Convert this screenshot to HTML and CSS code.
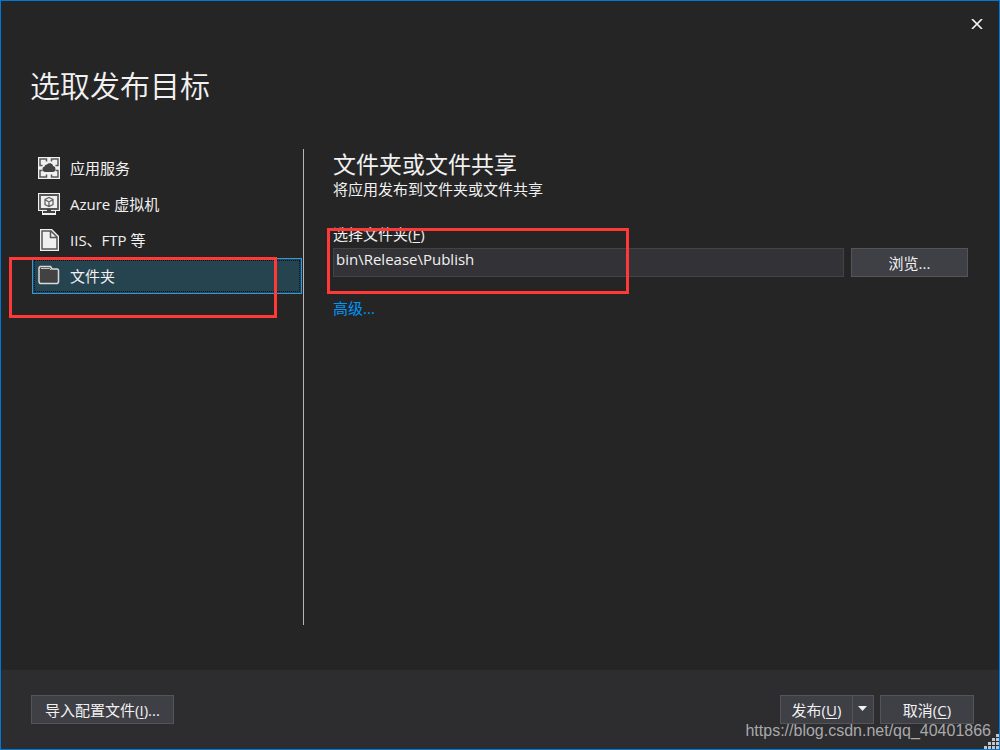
FILE: index.html
```html
<!DOCTYPE html>
<html lang="zh-CN">
<head>
    <meta charset="UTF-8">
    <meta name="viewport" content="width=device-width, initial-scale=1.0">
    <title>选取发布目标</title>
    <link rel="stylesheet" href="styles.css">
</head>
<body>
    <div class="dialog">
        <header class="header">
            <button class="close-btn" type="button" aria-label="关闭">
                <svg width="12" height="10" viewBox="0 0 12 10"><path d="M1 0L11 10M11 0L1 10" stroke="#f1f1f1" stroke-width="1.700"/></svg>
            </button>
            <h1>选取发布目标</h1>
        </header>

        <main class="main">
            <nav class="targets">
                <button class="target" type="button">
                    <svg class="icon" viewBox="0 0 22 22">
                        <path fill="#f0eff1" d="M0 0h22v22H0z"/>
                        <path fill="none" stroke="#5a5a5a" stroke-width="1.500" d="M8.500 4.500V2H2v6.500h2.500M13.500 4.500V2H20v6.500h-2.500M8.500 17.500V20H2v-6.500h2.500M13.500 17.500V20H20v-6.500h-2.500"/>
                        <path fill="#424242" d="M7 15a2.800 2.800 0 0 1-.5-5.500 2.500 2.500 0 0 1 2.500-2 3.500 3.500 0 0 1 6.200 1.600 3 3 0 0 1-.2 5.900z"/>
                    </svg>
                    <span>应用服务</span>
                </button>
                <button class="target" type="button">
                    <svg class="icon" viewBox="0 0 22 22">
                        <path fill="#f0eff1" d="M0 0h22v18h-4v4H4v-4H0z"/>
                        <path fill="none" stroke="#555" stroke-width="1.800" d="M2 2h18v14H2z"/>
                        <path fill="#424242" d="M9 16h4v2h4v2H5v-2h4z"/>
                        <path fill="none" stroke="#666" stroke-width="1.300" d="M11 4.500l4 2v5l-4 2-4-2v-5zM7 6.500l4 2.500 4-2.500M11 9v4.500"/>
                    </svg>
                    <span>Azure 虚拟机</span>
                </button>
                <button class="target" type="button">
                    <svg class="icon" viewBox="0 0 22 22">
                        <path fill="#f0eff1" d="M2 0h12l7 7v15H2z"/>
                        <path fill="none" stroke="#555" stroke-width="1.500" d="M4 2h9l6 6v12H4zM12.500 2v6.500H19"/>
                    </svg>
                    <span>IIS、FTP 等</span>
                </button>
                <button class="target selected" type="button" aria-current="true">
                    <svg class="icon" viewBox="0 0 22 22">
                        <path fill="#424242" stroke="#d8dadb" stroke-width="1.500" stroke-linejoin="round" d="M1 3l1-1.500h10.500L14 4h5.500l1 1v12l-1 1.500H2L1 17z"/>
                        <path fill="none" stroke="#c5c5c5" d="M3 3.500h8.500l1.500 1.500"/>
                    </svg>
                    <span>文件夹</span>
                    <i class="mark mark-target"></i>
                </button>
            </nav>

            <section class="content">
                <h2>文件夹或文件共享</h2>
                <p>将应用发布到文件夹或文件共享</p>
                <div class="field">
                    <label for="folder">选择文件夹(<u>F</u>)</label>
                    <div class="field-row">
                        <input id="folder" type="text" value="bin\Release\Publish">
                        <button class="btn browse" type="button">浏览...</button>
                    </div>
                    <i class="mark mark-field"></i>
                </div>
                <a class="link" href="#">高级...</a>
            </section>
        </main>

        <footer class="footer">
            <button class="btn import" type="button">导入配置文件(<u>I</u>)...</button>
            <div class="split">
                <button class="btn publish" type="button">发布(<u>U</u>)</button>
                <button class="btn arrow" type="button" aria-label="更多发布选项">
                    <svg width="10" height="5" viewBox="0 0 10 5"><path fill="#f1f1f1" d="M0 0h9L4.500 5z"/></svg>
                </button>
            </div>
            <button class="btn cancel" type="button">取消(<u>C</u>)</button>
            <span class="watermark">https://blog.csdn.net/qq_40401866</span>
            <svg class="grip" width="15" height="15" viewBox="0 0 15 15">
                <path fill="#c4c4cc" d="M12 0h3v3h-3zM8 4h3v3H8zM12 4h3v3h-3zM4 8h3v3H4zM8 8h3v3H8zM12 8h3v3h-3zM0 12h3v3H0zM4 12h3v3H4zM8 12h3v3H8zM12 12h3v3h-3z"/>
            </svg>
        </footer>
    </div>
</body>
</html>
```
FILE: styles.css
```css
* {
    box-sizing: border-box;
}
body {
    margin: 0;
    background: #252526;
    color: #f1f1f1;
    font-family: "Open Sans", "Noto Sans CJK SC", sans-serif;
    font-size: 15px;
    line-height: 20px;
}
button, input {
    font: inherit;
    color: inherit;
    margin: 0;
}
u {
    text-underline-offset: 2px;
}
.dialog {
    display: flex;
    flex-direction: column;
    min-height: 100vh;
    border: 1px solid #0078d7;
}
.header {
    display: flex;
    flex-direction: column;
    padding: 11px 10px 41px 29px;
}
.close-btn {
    display: flex;
    align-items: center;
    justify-content: center;
    align-self: flex-end;
    width: 24px;
    height: 24px;
    padding: 0;
    border: none;
    background: none;
}
h1 {
    margin: 28px 0 0;
    font-size: 30px;
    font-weight: 350;
    line-height: 44px;
}
.main {
    display: flex;
    flex: 1;
    padding: 0 31px 45px;
}
.targets {
    width: 272px;
    padding-right: 1px;
    border-right: 1px solid #b4b4bc;
}
.target {
    position: relative;
    display: flex;
    align-items: center;
    gap: 10px;
    width: 100%;
    height: 36px;
    padding: 0 5px;
    border: 1px solid transparent;
    background: none;
    text-align: left;
}
.target:first-child {
    margin-top: 1px;
}
.icon {
    flex: none;
    width: 22px;
    height: 22px;
}
.target.selected {
    border-color: #2f9bdc;
    background: #264350;
    outline: 1px dotted #0b1216;
    outline-offset: -3px;
}
.mark {
    position: absolute;
    border: 3px solid #ff3838;
    pointer-events: none;
}
.mark-target {
    top: -2px;
    left: -24px;
    width: 268px;
    height: 61px;
}
.mark-field {
    top: 3px;
    left: -6px;
    width: 302px;
    height: 66px;
}
.content {
    flex: 1;
    padding-left: 29px;
}
h2 {
    margin: 0;
    font-size: 23px;
    font-weight: 400;
    line-height: 30px;
}
p {
    margin: 0;
}
.field {
    position: relative;
    margin-top: 26px;
}
.field label {
    display: block;
    height: 23px;
    line-height: 18px;
}
.field-row {
    display: flex;
    gap: 7px;
}
.field input {
    flex: 1;
    min-width: 0;
    height: 29px;
    padding: 0 2px 7px;
    border: 1px solid #434346;
    background: #333337;
}
.btn {
    height: 29px;
    padding: 2px 0 0;
    border: 1px solid #555558;
    background: #3f3f46;
    line-height: 25px;
}
.browse {
    width: 117px;
}
.link {
    display: inline-block;
    margin-top: 21px;
    color: #0097fb;
    text-decoration: none;
}
.footer {
    position: relative;
    display: flex;
    gap: 6px;
    height: 79px;
    padding: 25px 25px 0 30px;
    background: #2d2d30;
}
.import {
    width: 143px;
    margin-right: auto;
}
.split {
    display: flex;
}
.publish {
    width: 72px;
    border-right: none;
}
.arrow {
    display: flex;
    justify-content: center;
    width: 22px;
    padding-top: 10px;
}
.cancel {
    width: 94px;
}
.watermark {
    position: absolute;
    right: 8px;
    bottom: 8px;
    color: #a9a9ab;
    font-family: "Liberation Sans", sans-serif;
    font-size: 16px;
}
.grip {
    position: absolute;
    right: 0;
    bottom: 0;
}
```
